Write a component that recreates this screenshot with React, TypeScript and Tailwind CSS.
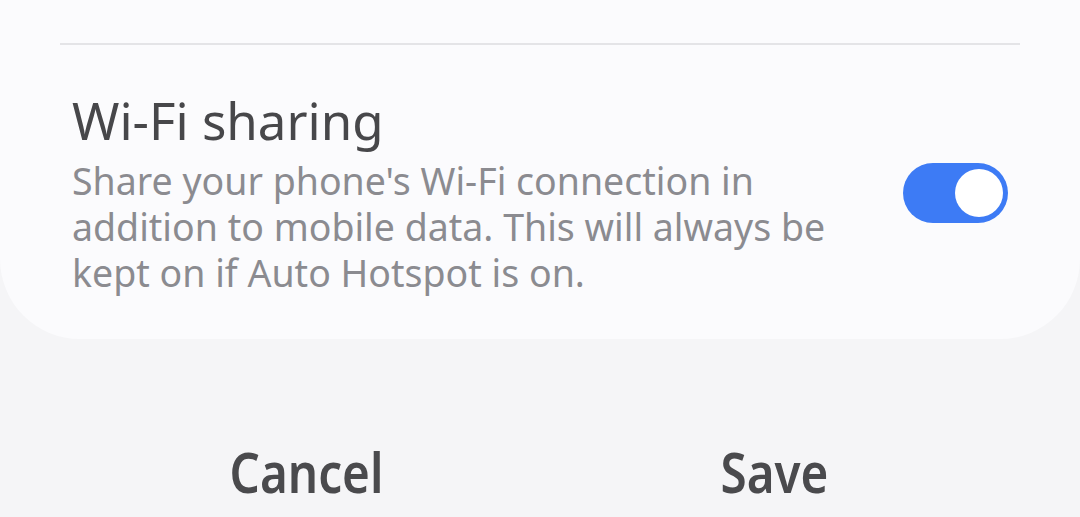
import React from "react";

export default function App() {
  return (
    <div className="w-[1080px] h-[517px] overflow-hidden bg-[#f5f5f7] font-['Noto_Sans',sans-serif]">
      {/* card */}
      <div className="bg-[#fbfbfd] rounded-b-[80px] pt-[43px] pb-[43px]">
        <div className="mx-[60px] h-[2px] bg-[#e4e4e7]" />
        <div className="flex items-center justify-between px-[72px] mt-[45px]">
          <div className="flex flex-col">
            <div className="text-[51px] leading-[60px] text-[#47474a]">Wi-Fi sharing</div>
            <div className="mt-[8px] w-[770px] text-[37.5px] leading-[46px] text-[#8b8b90]">
              Share your phone's Wi-Fi connection in addition to mobile data. This will always be kept on if Auto Hotspot is on.
            </div>
          </div>
          <button className="relative w-[105px] h-[60px] rounded-full bg-[#3d7bf5] shrink-0">
            <span className="absolute right-[5px] top-[6px] w-[48px] h-[48px] rounded-full bg-white" />
          </button>
        </div>
      </div>
      {/* buttons */}
      <div className="flex px-[72px] mt-[100px]">
        <button className="flex-1 flex justify-center">
          <span className="inline-block scale-x-[0.85] text-[56px] leading-[64px] font-semibold text-[#4a4a4d]">Cancel</span>
        </button>
        <button className="flex-1 flex justify-center">
          <span className="inline-block scale-x-[0.85] text-[56px] leading-[64px] font-semibold text-[#4a4a4d]">Save</span>
        </button>
      </div>
    </div>
  );
}
